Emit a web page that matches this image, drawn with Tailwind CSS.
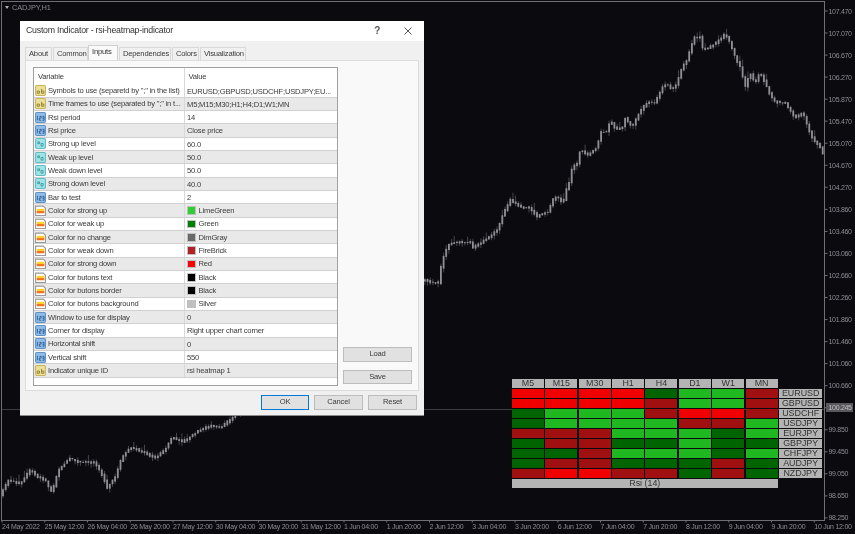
<!doctype html>
<html>
<head>
<meta charset="utf-8">
<script src="https://cdn.jsdelivr.net/npm/@tailwindcss/browser@4"></script>
</head>
<body class="m-0 bg-[#0a0a0f]">
<div class="relative w-[855px] h-[534px] overflow-hidden bg-[#0a0a0f] font-['Liberation_Sans',sans-serif] blur-[0.35px]">

  <!-- chart frame -->
  <div class="absolute left-[1px] top-[1px] w-[824px] h-[520px] border border-[#6f6f75]"></div>
  <svg id="candles" class="absolute left-0 top-0" width="855" height="534" viewBox="0 0 855 534"></svg>
  <div class="absolute left-[2px] top-[408.5px] w-[822px] h-px bg-[#3d3d42]"></div>
  <div class="absolute left-[5px] top-[3px] flex items-center gap-[3px] text-[7.4px] leading-[9px] tracking-[-0.1px] text-[#8a8a90]">
    <span class="w-0 h-0 border-x-[2.5px] border-x-transparent border-t-[3px] border-t-[#b0b0b0]"></span>
    <span>CADJPY,H1</span>
  </div>

  <!-- price axis -->
  <div class="absolute left-[828.5px] top-[6.5px] h-[516px] flex flex-col justify-between text-[7px] leading-[9px] text-[#8d8d93] tracking-[-0.3px]">
    <span>107.470</span><span>107.070</span><span>106.670</span><span>106.270</span><span>105.870</span><span>105.470</span><span>105.070</span><span>104.670</span><span>104.270</span><span>103.860</span><span>103.460</span><span>103.060</span><span>102.660</span><span>102.260</span><span>101.860</span><span>101.460</span><span>101.060</span><span>100.660</span><span class="-ml-[2.5px] pl-[2.5px] w-[27px] bg-[#58585d] text-[#c0c0c0]">100.245</span><span>99.850</span><span>99.450</span><span>99.050</span><span>98.650</span><span>98.250</span>
  </div>

  <!-- time axis -->
  <div class="absolute left-[2px] top-[522px] flex text-[7px] leading-[9px] text-[#8d8d93] tracking-[-0.25px]">
    <span class="w-[42.75px] whitespace-nowrap">24 May 2022</span><span class="w-[42.75px] whitespace-nowrap">25 May 12:00</span><span class="w-[42.75px] whitespace-nowrap">26 May 04:00</span><span class="w-[42.75px] whitespace-nowrap">26 May 20:00</span><span class="w-[42.75px] whitespace-nowrap">27 May 12:00</span><span class="w-[42.75px] whitespace-nowrap">30 May 04:00</span><span class="w-[42.75px] whitespace-nowrap">30 May 20:00</span><span class="w-[42.75px] whitespace-nowrap">31 May 12:00</span><span class="w-[42.75px] whitespace-nowrap">1 Jun 04:00</span><span class="w-[42.75px] whitespace-nowrap">1 Jun 20:00</span><span class="w-[42.75px] whitespace-nowrap">2 Jun 12:00</span><span class="w-[42.75px] whitespace-nowrap">3 Jun 04:00</span><span class="w-[42.75px] whitespace-nowrap">3 Jun 20:00</span><span class="w-[42.75px] whitespace-nowrap">6 Jun 12:00</span><span class="w-[42.75px] whitespace-nowrap">7 Jun 04:00</span><span class="w-[42.75px] whitespace-nowrap">7 Jun 20:00</span><span class="w-[42.75px] whitespace-nowrap">8 Jun 12:00</span><span class="w-[42.75px] whitespace-nowrap">9 Jun 04:00</span><span class="w-[42.75px] whitespace-nowrap">9 Jun 20:00</span><span class="w-[42.75px] whitespace-nowrap">10 Jun 12:00</span>
  </div>

  <!-- heatmap -->
  <div class="absolute left-[512px] top-[379px] flex gap-[1.6px] text-[8.9px] leading-[8.7px] text-[#333]">
    <div class="flex flex-col w-[265.6px]">
      <div class="grid grid-cols-8 gap-x-[1.4px] gap-y-[1.3px] text-center">
        <div class="h-[8.7px] bg-[#b4b4b4]">M5</div><div class="h-[8.7px] bg-[#b4b4b4]">M15</div><div class="h-[8.7px] bg-[#b4b4b4]">M30</div><div class="h-[8.7px] bg-[#b4b4b4]">H1</div><div class="h-[8.7px] bg-[#b4b4b4]">H4</div><div class="h-[8.7px] bg-[#b4b4b4]">D1</div><div class="h-[8.7px] bg-[#b4b4b4]">W1</div><div class="h-[8.7px] bg-[#b4b4b4]">MN</div>
        <div class="h-[8.7px] bg-[#f00000]"></div><div class="h-[8.7px] bg-[#f00000]"></div><div class="h-[8.7px] bg-[#f00000]"></div><div class="h-[8.7px] bg-[#f00000]"></div><div class="h-[8.7px] bg-[#006400]"></div><div class="h-[8.7px] bg-[#20b820]"></div><div class="h-[8.7px] bg-[#20b820]"></div><div class="h-[8.7px] bg-[#a01010]"></div>
        <div class="h-[8.7px] bg-[#f00000]"></div><div class="h-[8.7px] bg-[#f00000]"></div><div class="h-[8.7px] bg-[#f00000]"></div><div class="h-[8.7px] bg-[#f00000]"></div><div class="h-[8.7px] bg-[#a01010]"></div><div class="h-[8.7px] bg-[#20b820]"></div><div class="h-[8.7px] bg-[#20b820]"></div><div class="h-[8.7px] bg-[#a01010]"></div>
        <div class="h-[8.7px] bg-[#006400]"></div><div class="h-[8.7px] bg-[#20b820]"></div><div class="h-[8.7px] bg-[#20b820]"></div><div class="h-[8.7px] bg-[#20b820]"></div><div class="h-[8.7px] bg-[#a01010]"></div><div class="h-[8.7px] bg-[#f00000]"></div><div class="h-[8.7px] bg-[#f00000]"></div><div class="h-[8.7px] bg-[#a01010]"></div>
        <div class="h-[8.7px] bg-[#006400]"></div><div class="h-[8.7px] bg-[#20b820]"></div><div class="h-[8.7px] bg-[#20b820]"></div><div class="h-[8.7px] bg-[#20b820]"></div><div class="h-[8.7px] bg-[#20b820]"></div><div class="h-[8.7px] bg-[#a01010]"></div><div class="h-[8.7px] bg-[#a01010]"></div><div class="h-[8.7px] bg-[#20b820]"></div>
        <div class="h-[8.7px] bg-[#a01010]"></div><div class="h-[8.7px] bg-[#a01010]"></div><div class="h-[8.7px] bg-[#a01010]"></div><div class="h-[8.7px] bg-[#20b820]"></div><div class="h-[8.7px] bg-[#20b820]"></div><div class="h-[8.7px] bg-[#20b820]"></div><div class="h-[8.7px] bg-[#006400]"></div><div class="h-[8.7px] bg-[#20b820]"></div>
        <div class="h-[8.7px] bg-[#006400]"></div><div class="h-[8.7px] bg-[#a01010]"></div><div class="h-[8.7px] bg-[#a01010]"></div><div class="h-[8.7px] bg-[#006400]"></div><div class="h-[8.7px] bg-[#006400]"></div><div class="h-[8.7px] bg-[#20b820]"></div><div class="h-[8.7px] bg-[#006400]"></div><div class="h-[8.7px] bg-[#006400]"></div>
        <div class="h-[8.7px] bg-[#006400]"></div><div class="h-[8.7px] bg-[#006400]"></div><div class="h-[8.7px] bg-[#a01010]"></div><div class="h-[8.7px] bg-[#20b820]"></div><div class="h-[8.7px] bg-[#20b820]"></div><div class="h-[8.7px] bg-[#20b820]"></div><div class="h-[8.7px] bg-[#006400]"></div><div class="h-[8.7px] bg-[#20b820]"></div>
        <div class="h-[8.7px] bg-[#006400]"></div><div class="h-[8.7px] bg-[#a01010]"></div><div class="h-[8.7px] bg-[#a01010]"></div><div class="h-[8.7px] bg-[#006400]"></div><div class="h-[8.7px] bg-[#006400]"></div><div class="h-[8.7px] bg-[#006400]"></div><div class="h-[8.7px] bg-[#a01010]"></div><div class="h-[8.7px] bg-[#006400]"></div>
        <div class="h-[8.7px] bg-[#a01010]"></div><div class="h-[8.7px] bg-[#f00000]"></div><div class="h-[8.7px] bg-[#f00000]"></div><div class="h-[8.7px] bg-[#a01010]"></div><div class="h-[8.7px] bg-[#a01010]"></div><div class="h-[8.7px] bg-[#006400]"></div><div class="h-[8.7px] bg-[#a01010]"></div><div class="h-[8.7px] bg-[#006400]"></div>
      </div>
      <div class="mt-[1.3px] h-[8.7px] bg-[#b4b4b4] text-center">Rsi (14)</div>
    </div>
    <div class="flex flex-col gap-[1.3px] pt-[10px] w-[43px] text-center">
      <div class="h-[8.7px] bg-[#b4b4b4]">EURUSD</div><div class="h-[8.7px] bg-[#b4b4b4]">GBPUSD</div><div class="h-[8.7px] bg-[#b4b4b4]">USDCHF</div><div class="h-[8.7px] bg-[#b4b4b4]">USDJPY</div><div class="h-[8.7px] bg-[#b4b4b4]">EURJPY</div><div class="h-[8.7px] bg-[#b4b4b4]">GBPJPY</div><div class="h-[8.7px] bg-[#b4b4b4]">CHFJPY</div><div class="h-[8.7px] bg-[#b4b4b4]">AUDJPY</div><div class="h-[8.7px] bg-[#b4b4b4]">NZDJPY</div>
    </div>
  </div>

  <!-- dialog -->
  <div class="absolute left-[20px] top-[21px] w-[404px] h-[395px] flex flex-col bg-[#f0f0f0] border-b border-[#8a8a8a] text-[7.6px] tracking-[-0.2px] leading-[13.33px] text-[#3a3a3a]">
    <div class="h-[20px] shrink-0 bg-white flex items-center pl-[6px] pr-[12px] text-[8.8px] tracking-[-0.25px] text-[#333]">
      <span class="flex-1">Custom Indicator - rsi-heatmap-indicator</span>
      <span class="mr-[24px] text-[10px] font-bold text-[#555]">?</span>
      <svg width="8" height="8" viewBox="0 0 8 8" class="text-[#555]"><path d="M.5.5 7.5 7.5M7.5.5 .5 7.5" stroke="currentColor" stroke-width="1"/></svg>
    </div>
    <!-- tabs -->
    <div class="h-[19px] shrink-0 flex items-end pl-[5px] gap-px leading-[12px]">
      <span class="h-[13px] px-[3px] w-[27px] bg-[#f0f0f0] border border-b-0 border-[#d9d9d9]">About</span>
      <span class="h-[13px] px-[3px] w-[35px] bg-[#f0f0f0] border border-b-0 border-[#d9d9d9]">Common</span>
      <span class="h-[15px] px-[3px] w-[30px] bg-[#fafafa] border border-b-0 border-[#d0d0d0] text-[#333] -mx-px">Inputs</span>
      <span class="h-[13px] px-[3px] w-[52px] ml-px bg-[#f0f0f0] border border-b-0 border-[#d9d9d9]">Dependencies</span>
      <span class="h-[13px] px-[3px] w-[27px] bg-[#f0f0f0] border border-b-0 border-[#d9d9d9]">Colors</span>
      <span class="h-[13px] px-[3px] w-[46px] bg-[#f0f0f0] border border-b-0 border-[#d9d9d9] whitespace-nowrap">Visualization</span>
    </div>
    <!-- panel -->
    <div class="mx-[5px] h-[331px] shrink-0 flex gap-[5px] pl-[7px] pt-[6px] pr-[7px] bg-[#f9f9f9] border border-[#dcdcdc]">
      <!-- table -->
      <div class="w-[305px] h-[319px] shrink-0 bg-white border border-[#a0a0a0]">
        <div class="flex h-[16.5px] items-center">
          <span class="w-[150.5px] pl-[4px] border-r border-[#d8d8d8] h-full flex items-center">Variable</span><span class="pl-[4px]">Value</span>
        </div>
        <div class="flex h-[13.33px] border-b border-[#d0d0d0] bg-white"><span class="w-[150.5px] flex gap-[2px] items-center pl-[1px] border-r border-[#d8d8d8] whitespace-nowrap"><svg width="11" height="11" viewBox="0 0 10 10" class="shrink-0"><rect x=".5" y=".5" width="9" height="9" rx="1" fill="#ecdf96" stroke="#c9b65e"/><path d="M2 5.5h2v2H2zM6 3.5v4h2v-2H6" fill="none" stroke="#8a7a2c" stroke-width=".8"/></svg>Symbols to use (separetd by ";" in the list)</span><span class="pl-[2.5px] whitespace-nowrap">EURUSD;GBPUSD;USDCHF;USDJPY;EU...</span></div>
        <div class="flex h-[13.33px] border-b border-[#d0d0d0] bg-[#e9e9e9]"><span class="w-[150.5px] flex gap-[2px] items-center pl-[1px] border-r border-[#d8d8d8] whitespace-nowrap"><svg width="11" height="11" viewBox="0 0 10 10" class="shrink-0"><rect x=".5" y=".5" width="9" height="9" rx="1" fill="#ecdf96" stroke="#c9b65e"/><path d="M2 5.5h2v2H2zM6 3.5v4h2v-2H6" fill="none" stroke="#8a7a2c" stroke-width=".8"/></svg>Time frames to use (separated by ";" in t...</span><span class="pl-[2.5px] whitespace-nowrap">M5;M15;M30;H1;H4;D1;W1;MN</span></div>
        <div class="flex h-[13.33px] border-b border-[#d0d0d0] bg-white"><span class="w-[150.5px] flex gap-[2px] items-center pl-[1px] border-r border-[#d8d8d8] whitespace-nowrap"><svg width="11" height="11" viewBox="0 0 10 10" class="shrink-0"><rect x=".5" y=".5" width="9" height="9" rx="1" fill="#8fbce8" stroke="#5f93c8"/><path d="M2.2 3.5v4M4 4h1.6v1.5H4v2h1.6M6.8 4h1.4v3.5H6.8M6.8 5.7h1.4" fill="none" stroke="#1d4f88" stroke-width=".7"/></svg>Rsi period</span><span class="pl-[2.5px]">14</span></div>
        <div class="flex h-[13.33px] border-b border-[#d0d0d0] bg-[#e9e9e9]"><span class="w-[150.5px] flex gap-[2px] items-center pl-[1px] border-r border-[#d8d8d8] whitespace-nowrap"><svg width="11" height="11" viewBox="0 0 10 10" class="shrink-0"><rect x=".5" y=".5" width="9" height="9" rx="1" fill="#8fbce8" stroke="#5f93c8"/><path d="M2.2 3.5v4M4 4h1.6v1.5H4v2h1.6M6.8 4h1.4v3.5H6.8M6.8 5.7h1.4" fill="none" stroke="#1d4f88" stroke-width=".7"/></svg>Rsi price</span><span class="pl-[2.5px]">Close price</span></div>
        <div class="flex h-[13.33px] border-b border-[#d0d0d0] bg-white"><span class="w-[150.5px] flex gap-[2px] items-center pl-[1px] border-r border-[#d8d8d8] whitespace-nowrap"><svg width="11" height="11" viewBox="0 0 10 10" class="shrink-0"><rect x=".5" y=".5" width="9" height="9" rx="1" fill="#9fe3e6" stroke="#63bcc4"/><path d="M2.5 3.5h1.6v1.6H2.5zM5.5 5h1.8v2.4H5.5z" fill="none" stroke="#2b8f99" stroke-width=".7"/></svg>Strong up level</span><span class="pl-[2.5px]">60.0</span></div>
        <div class="flex h-[13.33px] border-b border-[#d0d0d0] bg-[#e9e9e9]"><span class="w-[150.5px] flex gap-[2px] items-center pl-[1px] border-r border-[#d8d8d8] whitespace-nowrap"><svg width="11" height="11" viewBox="0 0 10 10" class="shrink-0"><rect x=".5" y=".5" width="9" height="9" rx="1" fill="#9fe3e6" stroke="#63bcc4"/><path d="M2.5 3.5h1.6v1.6H2.5zM5.5 5h1.8v2.4H5.5z" fill="none" stroke="#2b8f99" stroke-width=".7"/></svg>Weak up level</span><span class="pl-[2.5px]">50.0</span></div>
        <div class="flex h-[13.33px] border-b border-[#d0d0d0] bg-white"><span class="w-[150.5px] flex gap-[2px] items-center pl-[1px] border-r border-[#d8d8d8] whitespace-nowrap"><svg width="11" height="11" viewBox="0 0 10 10" class="shrink-0"><rect x=".5" y=".5" width="9" height="9" rx="1" fill="#9fe3e6" stroke="#63bcc4"/><path d="M2.5 3.5h1.6v1.6H2.5zM5.5 5h1.8v2.4H5.5z" fill="none" stroke="#2b8f99" stroke-width=".7"/></svg>Weak down level</span><span class="pl-[2.5px]">50.0</span></div>
        <div class="flex h-[13.33px] border-b border-[#d0d0d0] bg-[#e9e9e9]"><span class="w-[150.5px] flex gap-[2px] items-center pl-[1px] border-r border-[#d8d8d8] whitespace-nowrap"><svg width="11" height="11" viewBox="0 0 10 10" class="shrink-0"><rect x=".5" y=".5" width="9" height="9" rx="1" fill="#9fe3e6" stroke="#63bcc4"/><path d="M2.5 3.5h1.6v1.6H2.5zM5.5 5h1.8v2.4H5.5z" fill="none" stroke="#2b8f99" stroke-width=".7"/></svg>Strong down level</span><span class="pl-[2.5px]">40.0</span></div>
        <div class="flex h-[13.33px] border-b border-[#d0d0d0] bg-white"><span class="w-[150.5px] flex gap-[2px] items-center pl-[1px] border-r border-[#d8d8d8] whitespace-nowrap"><svg width="11" height="11" viewBox="0 0 10 10" class="shrink-0"><rect x=".5" y=".5" width="9" height="9" rx="1" fill="#8fbce8" stroke="#5f93c8"/><path d="M2.2 3.5v4M4 4h1.6v1.5H4v2h1.6M6.8 4h1.4v3.5H6.8M6.8 5.7h1.4" fill="none" stroke="#1d4f88" stroke-width=".7"/></svg>Bar to test</span><span class="pl-[2.5px]">2</span></div>
        <div class="flex h-[13.33px] border-b border-[#d0d0d0] bg-[#e9e9e9]"><span class="w-[150.5px] flex gap-[2px] items-center pl-[1px] border-r border-[#d8d8d8] whitespace-nowrap"><svg width="11" height="11" viewBox="0 0 10 10" class="shrink-0"><path d="M.5 1h7l2 2v6.5h-9z" fill="#fff" stroke="#999"/><rect x="1.5" y="3.5" width="7" height="2" fill="#ffcf2a"/><rect x="1.5" y="5.5" width="7" height="2" fill="#f2701c"/></svg>Color for strong up</span><span class="pl-[2.5px] flex items-center gap-[3px]"><span class="w-[8.5px] h-[8.5px] bg-[#32cd32] border border-[#c0c0c0]"></span>LimeGreen</span></div>
        <div class="flex h-[13.33px] border-b border-[#d0d0d0] bg-white"><span class="w-[150.5px] flex gap-[2px] items-center pl-[1px] border-r border-[#d8d8d8] whitespace-nowrap"><svg width="11" height="11" viewBox="0 0 10 10" class="shrink-0"><path d="M.5 1h7l2 2v6.5h-9z" fill="#fff" stroke="#999"/><rect x="1.5" y="3.5" width="7" height="2" fill="#ffcf2a"/><rect x="1.5" y="5.5" width="7" height="2" fill="#f2701c"/></svg>Color for weak up</span><span class="pl-[2.5px] flex items-center gap-[3px]"><span class="w-[8.5px] h-[8.5px] bg-[#008000] border border-[#c0c0c0]"></span>Green</span></div>
        <div class="flex h-[13.33px] border-b border-[#d0d0d0] bg-[#e9e9e9]"><span class="w-[150.5px] flex gap-[2px] items-center pl-[1px] border-r border-[#d8d8d8] whitespace-nowrap"><svg width="11" height="11" viewBox="0 0 10 10" class="shrink-0"><path d="M.5 1h7l2 2v6.5h-9z" fill="#fff" stroke="#999"/><rect x="1.5" y="3.5" width="7" height="2" fill="#ffcf2a"/><rect x="1.5" y="5.5" width="7" height="2" fill="#f2701c"/></svg>Color for no change</span><span class="pl-[2.5px] flex items-center gap-[3px]"><span class="w-[8.5px] h-[8.5px] bg-[#696969] border border-[#c0c0c0]"></span>DimGray</span></div>
        <div class="flex h-[13.33px] border-b border-[#d0d0d0] bg-white"><span class="w-[150.5px] flex gap-[2px] items-center pl-[1px] border-r border-[#d8d8d8] whitespace-nowrap"><svg width="11" height="11" viewBox="0 0 10 10" class="shrink-0"><path d="M.5 1h7l2 2v6.5h-9z" fill="#fff" stroke="#999"/><rect x="1.5" y="3.5" width="7" height="2" fill="#ffcf2a"/><rect x="1.5" y="5.5" width="7" height="2" fill="#f2701c"/></svg>Color for weak down</span><span class="pl-[2.5px] flex items-center gap-[3px]"><span class="w-[8.5px] h-[8.5px] bg-[#b22222] border border-[#c0c0c0]"></span>FireBrick</span></div>
        <div class="flex h-[13.33px] border-b border-[#d0d0d0] bg-[#e9e9e9]"><span class="w-[150.5px] flex gap-[2px] items-center pl-[1px] border-r border-[#d8d8d8] whitespace-nowrap"><svg width="11" height="11" viewBox="0 0 10 10" class="shrink-0"><path d="M.5 1h7l2 2v6.5h-9z" fill="#fff" stroke="#999"/><rect x="1.5" y="3.5" width="7" height="2" fill="#ffcf2a"/><rect x="1.5" y="5.5" width="7" height="2" fill="#f2701c"/></svg>Color for strong down</span><span class="pl-[2.5px] flex items-center gap-[3px]"><span class="w-[8.5px] h-[8.5px] bg-[#ff0000] border border-[#c0c0c0]"></span>Red</span></div>
        <div class="flex h-[13.33px] border-b border-[#d0d0d0] bg-white"><span class="w-[150.5px] flex gap-[2px] items-center pl-[1px] border-r border-[#d8d8d8] whitespace-nowrap"><svg width="11" height="11" viewBox="0 0 10 10" class="shrink-0"><path d="M.5 1h7l2 2v6.5h-9z" fill="#fff" stroke="#999"/><rect x="1.5" y="3.5" width="7" height="2" fill="#ffcf2a"/><rect x="1.5" y="5.5" width="7" height="2" fill="#f2701c"/></svg>Color for butons text</span><span class="pl-[2.5px] flex items-center gap-[3px]"><span class="w-[8.5px] h-[8.5px] bg-black border border-[#c0c0c0]"></span>Black</span></div>
        <div class="flex h-[13.33px] border-b border-[#d0d0d0] bg-[#e9e9e9]"><span class="w-[150.5px] flex gap-[2px] items-center pl-[1px] border-r border-[#d8d8d8] whitespace-nowrap"><svg width="11" height="11" viewBox="0 0 10 10" class="shrink-0"><path d="M.5 1h7l2 2v6.5h-9z" fill="#fff" stroke="#999"/><rect x="1.5" y="3.5" width="7" height="2" fill="#ffcf2a"/><rect x="1.5" y="5.5" width="7" height="2" fill="#f2701c"/></svg>Color for butons border</span><span class="pl-[2.5px] flex items-center gap-[3px]"><span class="w-[8.5px] h-[8.5px] bg-black border border-[#c0c0c0]"></span>Black</span></div>
        <div class="flex h-[13.33px] border-b border-[#d0d0d0] bg-white"><span class="w-[150.5px] flex gap-[2px] items-center pl-[1px] border-r border-[#d8d8d8] whitespace-nowrap"><svg width="11" height="11" viewBox="0 0 10 10" class="shrink-0"><path d="M.5 1h7l2 2v6.5h-9z" fill="#fff" stroke="#999"/><rect x="1.5" y="3.5" width="7" height="2" fill="#ffcf2a"/><rect x="1.5" y="5.5" width="7" height="2" fill="#f2701c"/></svg>Color for butons background</span><span class="pl-[2.5px] flex items-center gap-[3px]"><span class="w-[8.5px] h-[8.5px] bg-[#c0c0c0] border border-[#c0c0c0]"></span>Silver</span></div>
        <div class="flex h-[13.33px] border-b border-[#d0d0d0] bg-[#e9e9e9]"><span class="w-[150.5px] flex gap-[2px] items-center pl-[1px] border-r border-[#d8d8d8] whitespace-nowrap"><svg width="11" height="11" viewBox="0 0 10 10" class="shrink-0"><rect x=".5" y=".5" width="9" height="9" rx="1" fill="#8fbce8" stroke="#5f93c8"/><path d="M2.2 3.5v4M4 4h1.6v1.5H4v2h1.6M6.8 4h1.4v3.5H6.8M6.8 5.7h1.4" fill="none" stroke="#1d4f88" stroke-width=".7"/></svg>Window to use for display</span><span class="pl-[2.5px]">0</span></div>
        <div class="flex h-[13.33px] border-b border-[#d0d0d0] bg-white"><span class="w-[150.5px] flex gap-[2px] items-center pl-[1px] border-r border-[#d8d8d8] whitespace-nowrap"><svg width="11" height="11" viewBox="0 0 10 10" class="shrink-0"><rect x=".5" y=".5" width="9" height="9" rx="1" fill="#8fbce8" stroke="#5f93c8"/><path d="M2.2 3.5v4M4 4h1.6v1.5H4v2h1.6M6.8 4h1.4v3.5H6.8M6.8 5.7h1.4" fill="none" stroke="#1d4f88" stroke-width=".7"/></svg>Corner for display</span><span class="pl-[2.5px] whitespace-nowrap">Right upper chart corner</span></div>
        <div class="flex h-[13.33px] border-b border-[#d0d0d0] bg-[#e9e9e9]"><span class="w-[150.5px] flex gap-[2px] items-center pl-[1px] border-r border-[#d8d8d8] whitespace-nowrap"><svg width="11" height="11" viewBox="0 0 10 10" class="shrink-0"><rect x=".5" y=".5" width="9" height="9" rx="1" fill="#8fbce8" stroke="#5f93c8"/><path d="M2.2 3.5v4M4 4h1.6v1.5H4v2h1.6M6.8 4h1.4v3.5H6.8M6.8 5.7h1.4" fill="none" stroke="#1d4f88" stroke-width=".7"/></svg>Horizontal shift</span><span class="pl-[2.5px]">0</span></div>
        <div class="flex h-[13.33px] border-b border-[#d0d0d0] bg-white"><span class="w-[150.5px] flex gap-[2px] items-center pl-[1px] border-r border-[#d8d8d8] whitespace-nowrap"><svg width="11" height="11" viewBox="0 0 10 10" class="shrink-0"><rect x=".5" y=".5" width="9" height="9" rx="1" fill="#8fbce8" stroke="#5f93c8"/><path d="M2.2 3.5v4M4 4h1.6v1.5H4v2h1.6M6.8 4h1.4v3.5H6.8M6.8 5.7h1.4" fill="none" stroke="#1d4f88" stroke-width=".7"/></svg>Vertical shift</span><span class="pl-[2.5px]">550</span></div>
        <div class="flex h-[13.33px] border-b border-[#d0d0d0] bg-[#e9e9e9]"><span class="w-[150.5px] flex gap-[2px] items-center pl-[1px] border-r border-[#d8d8d8] whitespace-nowrap"><svg width="11" height="11" viewBox="0 0 10 10" class="shrink-0"><rect x=".5" y=".5" width="9" height="9" rx="1" fill="#ecdf96" stroke="#c9b65e"/><path d="M2 5.5h2v2H2zM6 3.5v4h2v-2H6" fill="none" stroke="#8a7a2c" stroke-width=".8"/></svg>Indicator unique ID</span><span class="pl-[2.5px]">rsi heatmap 1</span></div>
      </div>
      <!-- load/save -->
      <div class="flex-1 flex flex-col justify-end gap-[8px] pb-[6px]">
        <button class="h-[14.5px] w-[69px] bg-[#e1e1e1] border border-[#bcbcbc] leading-[12px]">Load</button>
        <button class="h-[14.5px] w-[69px] bg-[#e1e1e1] border border-[#bcbcbc] leading-[12px]">Save</button>
      </div>
    </div>
    <!-- footer -->
    <div class="flex justify-end gap-[5px] pr-[7px] pt-[3.5px]">
      <button class="h-[15px] w-[48px] bg-[#e1e1e1] border-[1.5px] border-[#0078d7] leading-[12px]">OK</button>
      <button class="h-[15px] w-[49px] bg-[#e1e1e1] border border-[#bcbcbc] leading-[12px]">Cancel</button>
      <button class="h-[15px] w-[49px] bg-[#e1e1e1] border border-[#bcbcbc] leading-[12px]">Reset</button>
    </div>
  </div>
</div>

<script>
(function(){
  var pts=[[3,490],[8,480],[15,482],[20,484],[30,470],[37,477],[45,480],[52,493],[58,470],[70,458],[78,462],[87,462],[95,463],[103,477],[107,488],[115,477],[122,457],[130,447],[143,452],[155,458],[165,450],[172,437],[182,442],[190,437],[200,430],[212,425],[220,428],[232,418],[240,410],
  [424,280],[430,282],[440,283],[441,265],[445,252],[450,243],[470,242],[472,248],[490,237],[497,230],[502,217],[505,210],[510,200],[520,207],[530,208],[537,217],[543,213],[548,212],[552,200],[557,197],[563,203],[566,190],[570,181],[572,167],[578,163],[580,150],[587,155],[595,150],[598,143],[600,132],[607,132],[610,120],[616,130],[622,128],[625,118],[632,127],[637,117],[642,108],[648,102],[655,103],[662,87],[667,84],[672,90],[677,83],[682,67],[687,60],[690,50],[694,37],[700,37],[703,50],[710,47],[717,42],[722,37],[725,33],[730,43],[735,57],[740,67],[745,87],[750,73],[755,83],[760,72],[765,83],[770,95],[775,102],[785,103],[790,110],[795,118],[803,113],[808,128],[813,140],[820,147],[823,155]];
  function yAt(x){for(var i=1;i<pts.length;i++){if(x<=pts[i][0]){var a=pts[i-1],b=pts[i];return a[1]+(b[1]-a[1])*(x-a[0])/(b[0]-a[0]);}}return pts[pts.length-1][1];}
  var s='',w='',seed=7;
  function r(){seed=(seed*9301+49297)%233280;return seed/233280;}
  for(var x=3;x<=823;x+=2.67){
    var y0=yAt(x-2.67),y1=yAt(x);
    var top=Math.min(y0,y1)-r()*1.5,bot=Math.max(y0,y1)+r()*1.5;
    var v=r()<0.25?r()*7:r()*3;
    w+='M'+x.toFixed(1)+' '+(top-v).toFixed(1)+'V'+(bot+r()*4).toFixed(1);
    s+='<rect x="'+(x-0.9).toFixed(1)+'" y="'+top.toFixed(1)+'" width="1.8" height="'+Math.max(bot-top,1).toFixed(1)+'" fill="#8f8f95"/>';
  }
  var ticks='';
  for(var i=0;i<20;i++){ticks+='M'+(2+42.75*i)+' 520v2.5';}
  for(var j=0;j<24;j++){ticks+='M825 '+(11+22.04*j).toFixed(1)+'h2.5';}
  document.getElementById('candles').innerHTML='<path d="'+w+'" stroke="#55555b" stroke-width="0.8" fill="none"/>'+s+'<path d="'+ticks+'" stroke="#6f6f75" fill="none"/>';
})();
</script>
</body>
</html>
